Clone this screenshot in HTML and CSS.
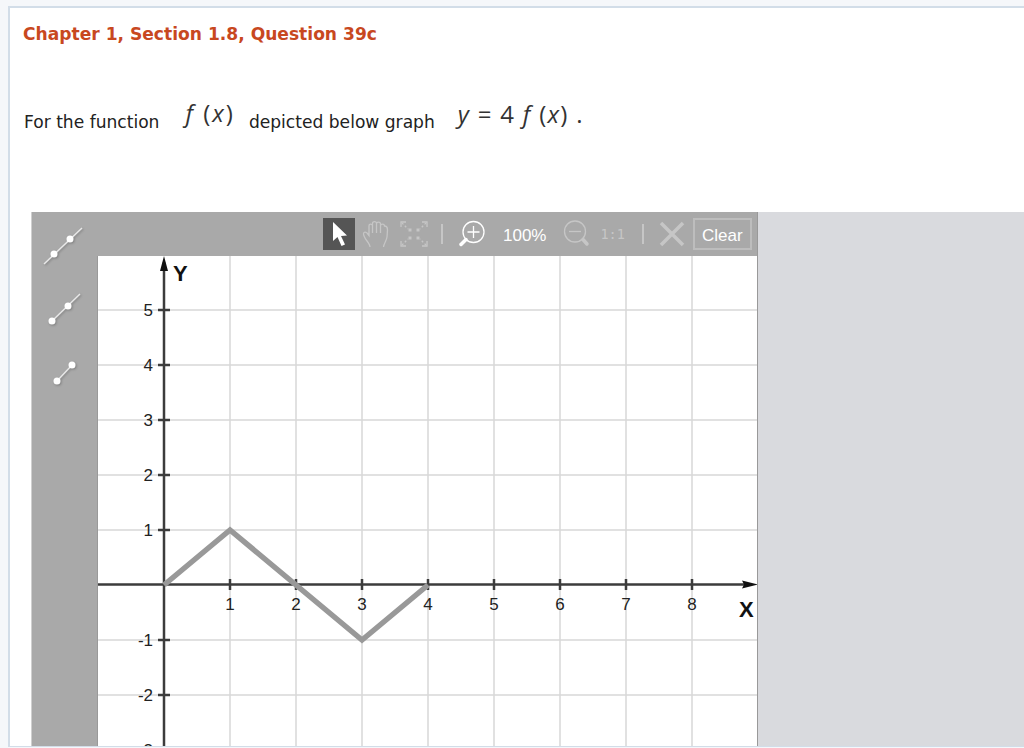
FILE: index.html
```html
<!DOCTYPE html>
<html lang="en">
<head>
  <meta charset="UTF-8">
  <title>Chapter 1, Section 1.8, Question 39c</title>
  <link rel="stylesheet" href="styles.css">
</head>
<body>
  <div class="card">
    <h1 class="title">Chapter 1, Section 1.8, Question 39c</h1>
    <p class="prompt">
      <span>For the function</span>
      <span class="math math-first"><i>f</i> (<i>x</i>)</span>
      <span>depicted below graph</span>
      <span class="math math-second"><i>y</i> = 4 <i>f</i> (<i>x</i>) .</span>
    </p>
    <div class="stage">
      <div class="applet">
        <div class="toolbar">
          <svg class="icon tool-active" width="32" height="32" viewBox="0 0 32 32">
            <path d="M10 4 L10 23 L14.500 19 L18.500 28 L22 26.500 L18 18 L24 17.500 Z" fill="#fff"/>
          </svg>
          <svg class="icon tool-hand" width="30" height="30" viewBox="0 0 30 30" fill="none" stroke="#c6c6c6" stroke-width="1.300">
            <path d="M9 28 C9 24 3 20 2.500 15 C2.500 12.500 5 12.500 6.500 14.500 L8 16.500 L8 7 C8 4.500 11.500 4.500 11.500 7 L11.500 14 M11.500 7 L11.500 4.500 C11.500 2 15.500 2 15.500 4.500 L15.500 14 M15.500 5 C15.500 2.500 19.500 2.500 19.500 5 L19.500 14 M19.500 7 C19.500 4.500 23.500 4.500 23.500 7 C26 7 26.500 9 26.500 11 L26 18 C25.500 22 23 24 22.500 28"/>
          </svg>
          <svg class="icon tool-fit" width="30" height="30" viewBox="0 0 30 30" fill="none" stroke="#c6c6c6" stroke-width="1.300">
            <path d="M2 8 L2 3 L7 3 M28 8 L28 3 L23 3 M2 22 L2 27 L7 27 M28 22 L28 27 L23 27"/>
            <path d="M3 4 L9 10 M27 4 L21 10 M3 26 L9 20 M27 26 L21 20" stroke-dasharray="2 2"/>
            <rect x="9.500" y="9.500" width="3" height="3" fill="#c6c6c6" stroke="none"/>
            <rect x="17.500" y="9.500" width="3" height="3" fill="#c6c6c6" stroke="none"/>
            <rect x="9.500" y="17.500" width="3" height="3" fill="#c6c6c6" stroke="none"/>
            <rect x="17.500" y="17.500" width="3" height="3" fill="#c6c6c6" stroke="none"/>
          </svg>
          <span class="divider"></span>
          <svg class="icon zoom-in" width="28" height="28" viewBox="0 0 28 28" fill="none" stroke="#fff">
            <circle cx="15.500" cy="12" r="10.500" stroke-width="1.300"/>
            <path d="M15.500 6 L15.500 18 M9.500 12 L21.500 12" stroke-width="1.300"/>
            <path d="M8 19.500 L3 24.500" stroke-width="3.500" stroke-linecap="round"/>
          </svg>
          <span class="zoom-level">100%</span>
          <svg class="icon zoom-out" width="28" height="28" viewBox="0 0 28 28" fill="none" stroke="#c6c6c6">
            <circle cx="13" cy="11.500" r="10.500" stroke-width="1.300"/>
            <path d="M7 11.500 L19 11.500" stroke-width="1.300"/>
            <path d="M21 19.500 L25 24" stroke-width="3.500" stroke-linecap="round"/>
          </svg>
          <span class="ratio">1:1</span>
          <span class="divider divider-second"></span>
          <svg class="icon tool-delete" width="26" height="26" viewBox="0 0 26 26" fill="none" stroke="#c6c6c6" stroke-width="3.500">
            <path d="M2 2 L24 24 M24 2 L2 24"/>
          </svg>
          <button class="clear">Clear</button>
        </div>
        <div class="workspace">
          <div class="palette">
            <svg width="44" height="44" viewBox="0 0 44 44" class="tool-line">
              <path class="tool-stroke" d="M3 41 L41 5"/>
              <circle class="tool-dot" cx="13" cy="31" r="3.500"/>
              <circle class="tool-dot" cx="29" cy="16" r="3.500"/>
            </svg>
            <svg width="40" height="40" viewBox="0 0 40 40" class="tool-ray">
              <path class="tool-stroke" d="M6 29 L34 2"/>
              <circle class="tool-dot" cx="6" cy="29" r="3.500"/>
              <circle class="tool-dot" cx="22" cy="14" r="3.500"/>
            </svg>
            <svg width="30" height="30" viewBox="0 0 30 30" class="tool-segment">
              <path class="tool-stroke" d="M6 24 L21 8"/>
              <circle class="tool-dot" cx="6" cy="24" r="3.500"/>
              <circle class="tool-dot" cx="21" cy="8" r="3.500"/>
            </svg>
          </div>
          <svg class="plot" width="660" height="490" viewBox="98 256 660 490">
            <g class="grid">
              <path d="M230 256V746 M296 256V746 M362 256V746 M428 256V746 M494 256V746 M560 256V746 M626 256V746 M692 256V746"/>
              <path d="M98 310H758 M98 365H758 M98 420H758 M98 475H758 M98 530H758 M98 640H758 M98 695H758"/>
            </g>
            <g class="axes">
              <path d="M164 262V746 M98 584.500H745"/>
              <path d="M158 310H170 M158 365H170 M158 420H170 M158 475H170 M158 530H170 M158 640H170 M158 695H170"/>
              <path d="M230 579V590 M296 579V590 M362 579V590 M428 579V590 M494 579V590 M560 579V590 M626 579V590 M692 579V590"/>
            </g>
            <path class="arrow" d="M164 256 L160 271 L168 271 Z M758 584.500 L742 580.500 L744 584.500 L742 588.500 Z"/>
            <path class="curve" d="M164 585 L230 530 L296 585 L362 640 L428 585"/>
            <g class="tick-x">
              <text x="230" y="610">1</text><text x="296" y="610">2</text><text x="362" y="610">3</text><text x="428" y="610">4</text>
              <text x="494" y="610">5</text><text x="560" y="610">6</text><text x="626" y="610">7</text><text x="692" y="610">8</text>
            </g>
            <g class="tick-y">
              <text x="153" y="316">5</text><text x="153" y="371">4</text><text x="153" y="426">3</text><text x="153" y="481">2</text>
              <text x="153" y="536">1</text><text x="153" y="646">-1</text><text x="153" y="701">-2</text><text x="153" y="756">-3</text>
            </g>
            <text class="axis-name" x="173" y="281">Y</text>
            <text class="axis-name" x="739" y="617">X</text>
          </svg>
        </div>
      </div>
      <div class="filler"></div>
    </div>
  </div>
</body>
</html>
```

FILE: styles.css
```css
html, body { height: 100%; }
body {
  margin: 0;
  background: #f5f7fa;
  overflow: hidden;
  box-sizing: border-box;
  padding: 6px 0 0 8px;
}
.card {
  height: 741px;
  box-sizing: border-box;
  background: #fff;
  border: 2px solid #d2dde8;
  border-bottom-width: 1px;
  border-right: 0;
  overflow: hidden;
  font-family: "DejaVu Sans", sans-serif;
}
.title {
  margin: 0;
  padding: 17px 0 0 13px;
  font-size: 17.100px;
  line-height: 19px;
  font-weight: bold;
  color: #c8481f;
}
.prompt {
  display: flex;
  align-items: flex-start;
  margin: 0;
  padding: 67px 0 0 14px;
  box-sizing: border-box;
  height: 168px;
  font-size: 17.100px;
  line-height: 22px;
  color: #222;
}
.math {
  font-family: "Open Sans", sans-serif;
  font-size: 24px;
  line-height: 28px;
  letter-spacing: 1.300px;
  color: #333;
}
.math-first { margin: -12px 14px 0 26px; letter-spacing: 2px; }
.math-second { margin: -11px 0 0 23px; }
.stage { display: flex; padding-left: 21px; height: 534px; }
.applet {
  width: 726px;
  flex: none;
  background: #a9a9a9;
  box-shadow: inset 1px 0 #cfcfcf;
  display: flex;
  flex-direction: column;
}
.filler { flex: 1; background: #d9dade; border-left: 1px solid #999; }
.toolbar {
  display: flex;
  align-items: center;
  height: 44px;
  padding-left: 292px;
  flex: none;
}
.icon { flex: none; display: block; }
.tool-active { background: #555; }
.tool-hand { margin-left: 6px; }
.tool-fit { margin-left: 8px; }
.divider { width: 2px; height: 20px; background: #c6c6c6; margin-left: 12px; flex: none; }
.zoom-in { margin-left: 15px; }
.zoom-level { font: 17px "Liberation Sans", sans-serif; color: #fff; margin: 4px 0 0 17px; }
.zoom-out { margin-left: 16px; }
.ratio { font: 13.500px "DejaVu Sans Mono", monospace; color: #c6c6c6; margin-left: 10px; }
.divider-second { margin-left: 17px; }
.tool-delete { margin-left: 15px; }
.clear {
  margin-left: 8px;
  width: 59px;
  height: 32px;
  padding: 3px 0 0;
  background: transparent;
  border: 2px solid #bdbdbd;
  color: #fff;
  font: 17px "Liberation Sans", sans-serif;
}
.workspace { display: flex; flex: 1; min-height: 0; }
.palette {
  width: 67px;
  flex: none;
  position: relative;
  box-sizing: border-box;
  border-right: 1px solid #999;
}
.palette svg { position: absolute; filter: drop-shadow(1px 1px 1px rgba(0,0,0,.25)); }
.tool-line { left: 10px; top: -33px; }
.tool-ray { left: 15px; top: 36px; }
.tool-segment { left: 20px; top: 101px; }
.tool-stroke { stroke: #e8e8e8; stroke-width: 1.500; fill: none; }
.tool-dot { fill: #fff; }
.plot { background: #fff; flex: none; display: block; }
.grid path { stroke: #d8d8d8; stroke-width: 1.500; fill: none; }
.axes path { stroke: #3c3c3c; stroke-width: 2.500; fill: none; }
.arrow { fill: #111; }
.curve { stroke: #999; stroke-width: 5.500; fill: none; }
.tick-x text, .tick-y text { font: 17px "Liberation Sans", sans-serif; fill: #222; }
.tick-x text { text-anchor: middle; }
.tick-y text { text-anchor: end; }
.axis-name { font: bold 22px "Liberation Sans", sans-serif; fill: #111; }
```
